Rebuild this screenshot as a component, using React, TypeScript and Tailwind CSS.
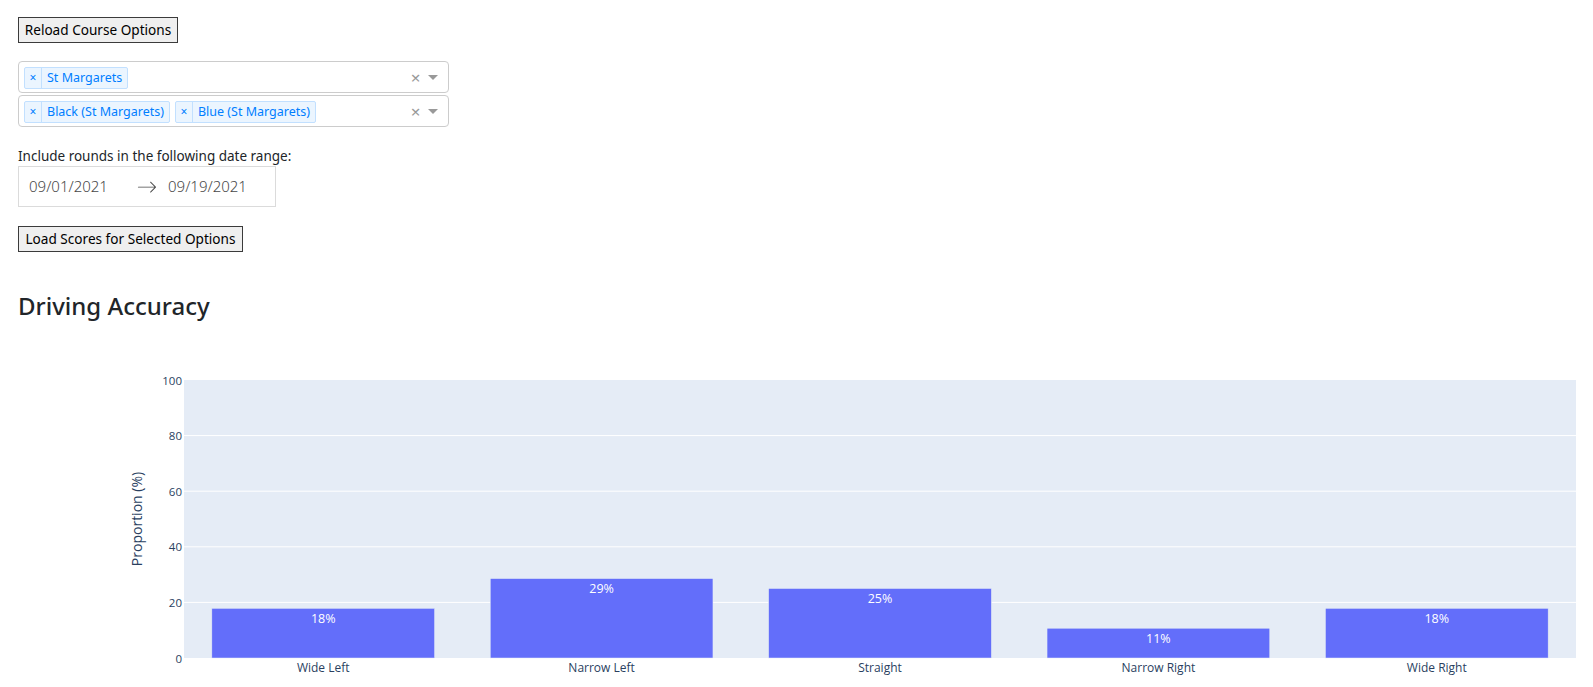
import React from 'react';

const BARS = [
  { label: 'Wide Left', value: 17.86, text: '18%' },
  { label: 'Narrow Left', value: 28.57, text: '29%' },
  { label: 'Straight', value: 25, text: '25%' },
  { label: 'Narrow Right', value: 10.71, text: '11%' },
  { label: 'Wide Right', value: 17.86, text: '18%' },
];

// plot area, in svg coordinates (svg starts at page y=322)
const PLOT_LEFT = 184;
const PLOT_TOP = 58;
const PLOT_W = 1392;
const PLOT_H = 278;

function Tag({ label }: { label: string }) {
  return (
    <div className="flex h-[22px] items-stretch rounded-[2px] border border-[#c2e0ff] bg-[#ebf5ff] text-[12.5px] leading-[20px] text-[#007eff]">
      <span className="flex w-[17px] items-center justify-center border-r border-[#c2e0ff] text-[12px]">×</span>
      <span className="px-[5px]">{label}</span>
    </div>
  );
}

function MultiSelect({ tags }: { tags: string[] }) {
  return (
    <div className="flex h-[32px] w-[431px] items-start rounded-[4px] border border-[#cccccc] bg-white">
      <div className="flex flex-1 gap-[5px] pl-[5px] pt-[5px]">
        {tags.map((t) => (
          <Tag key={t} label={t} />
        ))}
      </div>
      <div className="flex h-full items-center pr-[10px]">
        <span className="w-[17px] text-center text-[17px] leading-none text-[#999999]">×</span>
        <span className="ml-[4px] h-0 w-0 border-x-[5px] border-t-[5px] border-x-transparent border-t-[#999999]" />
      </div>
    </div>
  );
}

function DateRange() {
  return (
    <div className="flex h-[41px] w-[258px] items-center border border-[#dbdbdb] bg-white text-[15px] font-light text-[#484848]">
      <span className="w-[114px] pl-[10px]">09/01/2021</span>
      <svg viewBox="0 0 1000 1000" className="ml-[4px] h-[20px] w-[20px] fill-[#484848]">
        <path d="M694 242l249 250c12 11 12 21 1 32L694 773c-5 5-10 7-16 7s-11-2-16-7c-11-11-11-21 0-32l210-210H68c-13 0-23-10-23-23s10-23 23-23h806L662 275c-21-22 11-54 32-33z" />
      </svg>
      <span className="pl-[11px]">09/19/2021</span>
    </div>
  );
}

function Chart() {
  const slot = PLOT_W / BARS.length;
  const barW = slot * 0.8;
  const ticks = [0, 20, 40, 60, 80, 100];
  const yOf = (v: number) => PLOT_TOP + PLOT_H - (v / 100) * PLOT_H;
  const midY = PLOT_TOP + PLOT_H / 2;

  return (
    <svg width={1593} height={365} viewBox="0 0 1593 365" className="block font-['Open_Sans',sans-serif]">
      <rect x={PLOT_LEFT} y={PLOT_TOP} width={PLOT_W} height={PLOT_H} fill="#e5ecf6" />
      {ticks.slice(1, -1).map((t) => (
        <line key={t} x1={PLOT_LEFT} x2={PLOT_LEFT + PLOT_W} y1={yOf(t)} y2={yOf(t)} stroke="#ffffff" strokeWidth={1} />
      ))}
      {ticks.map((t) => (
        <text key={t} x={PLOT_LEFT - 2} y={yOf(t)} textAnchor="end" dominantBaseline="central" fontSize={11.5} fill="#2a3f5f">
          {t}
        </text>
      ))}
      <text
        x={136}
        y={midY}
        transform={`rotate(-90 136 ${midY})`}
        textAnchor="middle"
        dominantBaseline="central"
        fontSize={14}
        fill="#2a3f5f"
      >
        Proportion (%)
      </text>
      {BARS.map((b, i) => {
        const x = PLOT_LEFT + slot * i + (slot - barW) / 2;
        const top = yOf(b.value);
        const cx = PLOT_LEFT + slot * i + slot / 2;
        return (
          <g key={b.label}>
            <rect x={x} y={top} width={barW} height={PLOT_TOP + PLOT_H - top} fill="#636efa" stroke="#e5ecf6" strokeWidth={0.5} />
            <text x={cx} y={top + 10} textAnchor="middle" dominantBaseline="central" fontSize={12.5} fill="#ffffff">
              {b.text}
            </text>
            <text x={cx} y={PLOT_TOP + PLOT_H + 9} textAnchor="middle" dominantBaseline="central" fontSize={12} fill="#2a3f5f">
              {b.label}
            </text>
          </g>
        );
      })}
    </svg>
  );
}

export default function App() {
  return (
    <div className="h-[687px] overflow-hidden bg-white font-['Noto_Sans',sans-serif] text-[#212529]">
      <div className="px-[18px] pt-[17px]">
        <button className="flex h-[26px] w-[160px] items-center justify-center border border-[#3b3b3b] bg-[#efefef] text-[13.6px] text-black">
          Reload Course Options
        </button>

        <div className="mt-[18px] flex flex-col gap-[2px]">
          <MultiSelect tags={['St Margarets']} />
          <MultiSelect tags={['Black (St Margarets)', 'Blue (St Margarets)']} />
        </div>

        <div className="mt-[19px] h-[20px] text-[13.5px] leading-[20px]">Include rounds in the following date range:</div>
        <DateRange />

        <button className="mt-[19px] flex h-[26px] w-[225px] items-center justify-center border border-[#3b3b3b] bg-[#efefef] text-[13.6px] text-black">
          Load Scores for Selected Options
        </button>

        <h2 className="mt-[38px] h-[32px] text-[24px] font-medium leading-[32px]">Driving Accuracy</h2>
      </div>
      <Chart />
    </div>
  );
}
